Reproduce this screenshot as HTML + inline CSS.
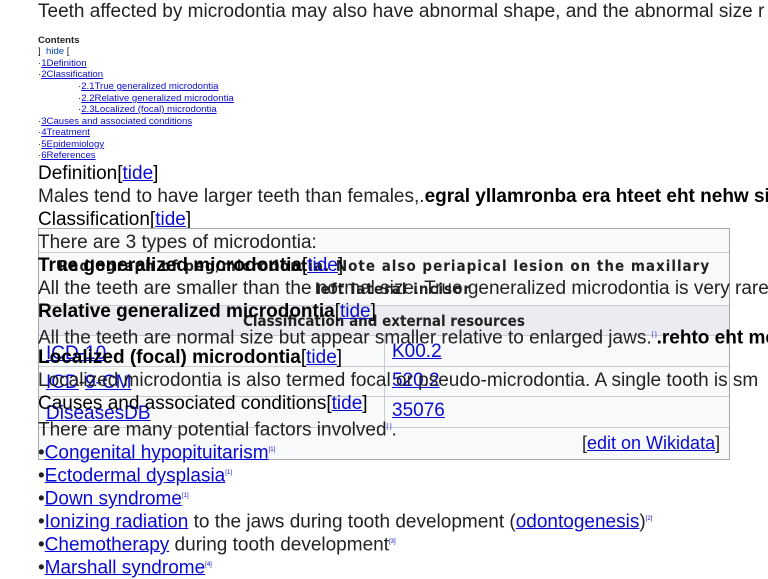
<html><head><style>
body{margin:0;width:768px;height:576px;overflow:hidden;background:#fff;font-family:"Liberation Sans",sans-serif;color:#222;position:relative}
.l{position:absolute;left:38px;white-space:nowrap;font-size:19px;line-height:22px}
a{color:#0b0bd0;text-decoration:underline}
.s{position:absolute;white-space:nowrap;font-size:9.6px;line-height:11.5px}
.ib{position:absolute;left:38px;top:228px;width:692px;height:232px;background:#f8f9fa;border:1px solid #a2a9b1;box-sizing:border-box}
.hr{position:absolute;left:39px;width:690px;height:1px;background:#c8ccd1}
.d{font-family:"DejaVu Sans Condensed","DejaVu Sans",sans-serif;font-weight:bold;font-size:15px;position:absolute;white-space:nowrap;color:#222}
sup{font-size:6px;color:#0b0bd0}
b{color:#000}
</style></head><body>
<div class="l" style="top:1px">Teeth affected by microdontia may also have abnormal shape, and the abnormal size r</div>
<div class="s" style="left:38px;top:35px;font-weight:bold">Contents</div>
<div class="s" style="left:38px;top:46px">] &nbsp;<span style="color:#0645ad">hide</span> [</div>
<div class="s" style="left:38px;top:58px">·<a>1Definition</a></div>
<div class="s" style="left:38px;top:69px">·<a>2Classification</a></div>
<div class="s" style="left:78px;top:81px">·<a>2.1True generalized microdontia</a></div>
<div class="s" style="left:78px;top:93px">·<a>2.2Relative generalized microdontia</a></div>
<div class="s" style="left:78px;top:104px">·<a>2.3Localized (focal) microdontia</a></div>
<div class="s" style="left:38px;top:116px">·<a>3Causes and associated conditions</a></div>
<div class="s" style="left:38px;top:127px">·<a>4Treatment</a></div>
<div class="s" style="left:38px;top:139px">·<a>5Epidemiology</a></div>
<div class="s" style="left:38px;top:150px">·<a>6References</a></div>
<div class="l" style="top:163px;color:#000">Definition[<a>tide</a>]</div>
<div class="l" style="top:186px">Males tend to have larger teeth than females,.<b>egral yllamronba era hteet eht nehw si</b> <a>a</a></div>
<div class="l" style="top:209px;color:#000">Classification[<a>tide</a>]</div>
<div class="ib"></div>
<div class="hr" style="top:252px"></div>
<div style="position:absolute;left:39px;top:305px;width:690px;height:31px;background:#eaecf0;border-top:1px solid #c8ccd1;border-bottom:1px solid #c8ccd1;box-sizing:border-box"></div>
<div class="hr" style="top:366px"></div>
<div class="hr" style="top:396px"></div>
<div class="hr" style="top:427px"></div>
<div style="position:absolute;left:384px;top:336px;width:1px;height:91px;background:#c8ccd1"></div>
<div class="d" style="left:58px;top:257px;letter-spacing:1px">Radiograph of peg/microdontia. Note also periapical lesion on the maxillary</div>
<div class="d" style="left:315px;top:280px;letter-spacing:1px">left lateral incisor</div>
<div class="d" style="left:243px;top:312px">Classification and external resources</div>
<div class="l" style="left:46px;top:343px"><a>ICD-10</a></div>
<div class="l" style="left:392px;top:341px"><a>K00.2</a></div>
<div class="l" style="left:46px;top:372px"><a>ICD</a>-<a>9-CM</a></div>
<div class="l" style="left:392px;top:370px"><a>520.2</a></div>
<div class="l" style="left:46px;top:403px"><a>DiseasesDB</a></div>
<div class="l" style="left:392px;top:400px"><a>35076</a></div>
<div class="l" style="left:582px;top:432px;font-size:18px">[<a>edit on Wikidata</a>]</div>
<div class="l" style="top:232px">There are 3 types of microdontia:</div>
<div class="l" style="top:255px;font-weight:bold;color:#000">True generalized microdontia<span style="font-weight:normal">[<a>tide</a>]</span></div>
<div class="l" style="top:278px">All the teeth are smaller than the normal size. True generalized microdontia is very rare</div>
<div class="l" style="top:301px;font-weight:bold;color:#000">Relative generalized microdontia<span style="font-weight:normal">[<a>tide</a>]</span></div>
<div class="l" style="top:324px">All the teeth are normal size but appear smaller relative to enlarged jaws.<sup>[ ]</sup><b>.rehto eht me</b></div>
<div class="l" style="top:347px;font-weight:bold;color:#000">Localized (focal) microdontia<span style="font-weight:normal">[<a>tide</a>]</span></div>
<div class="l" style="top:370px">Localized microdontia is also termed focal or pseudo-microdontia. A single tooth is sm</div>
<div class="l" style="top:393px;color:#000">Causes and associated conditions[<a>tide</a>]</div>
<div class="l" style="top:416px">There are many potential factors involved<sup>[ ]</sup>.</div>
<div class="l" style="top:439px">•<a>Congenital hypopituitarism</a><sup>[1]</sup></div>
<div class="l" style="top:462px">•<a>Ectodermal dysplasia</a><sup>[1]</sup></div>
<div class="l" style="top:485px">•<a>Down syndrome</a><sup>[1]</sup></div>
<div class="l" style="top:508px">•<a>Ionizing radiation</a> to the jaws during tooth development (<a>odontogenesis</a>)<sup>[2]</sup></div>
<div class="l" style="top:531px">•<a>Chemotherapy</a> during tooth development<sup>[3]</sup></div>
<div class="l" style="top:554px">•<a>Marshall syndrome</a><sup>[4]</sup></div>
</body></html>
